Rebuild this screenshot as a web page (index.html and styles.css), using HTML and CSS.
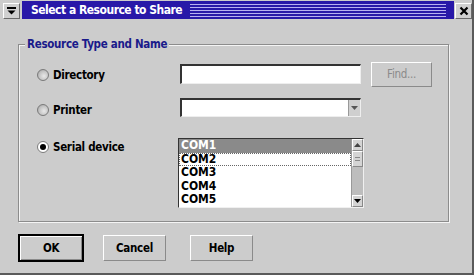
FILE: index.html
```html
<!DOCTYPE html>
<html>
<head>
<meta charset="utf-8">
<link rel="stylesheet" href="styles.css">
</head>
<body>
<div class="window">
  <div class="titlebar">
    <div class="tbtn sys">
      <svg width="11" height="10" viewBox="0 0 11 10"><rect x="1" y="1" width="9" height="2" fill="#000"/><path d="M1.5 4.5 H9.5 L5.5 8.5 Z" fill="#000"/></svg>
    </div>
    <div class="title">
      <span class="title-text">Select a Resource to Share</span>
      <span class="stripes"></span>
    </div>
    <div class="tbtn close">
      <svg width="10" height="10" viewBox="0 0 10 10"><path d="M1.5 1.5 L8.5 8.5 M8.5 1.5 L1.5 8.5" stroke="#000" stroke-width="2.2"/></svg>
    </div>
  </div>
  <div class="content">
    <div class="group">
      <span class="legend">Resource Type and Name</span>
      <div class="row r1">
        <label class="radio"><span class="dot"></span><span>Directory</span></label>
        <div class="field"></div>
        <div class="btn small disabled">Find...</div>
      </div>
      <div class="row r2">
        <label class="radio"><span class="dot"></span><span>Printer</span></label>
        <div class="field combo"><span class="combo-btn"><svg width="7" height="4" viewBox="0 0 7 4"><path d="M0 0 H7 L3.5 4 Z" fill="#555"/></svg></span></div>
      </div>
      <div class="row r3">
        <label class="radio"><span class="dot on"></span><span>Serial device</span></label>
        <div class="list">
          <div class="items">
            <div class="item sel">COM1</div>
            <div class="item focus">COM2</div>
            <div class="item">COM3</div>
            <div class="item">COM4</div>
            <div class="item">COM5</div>
          </div>
          <div class="vscroll">
            <span class="sbtn"><svg width="7" height="4" viewBox="0 0 7 4"><path d="M0 4 H7 L3.5 0 Z" fill="#444"/></svg></span>
            <span class="thumb"></span>
            <span class="track"></span>
            <span class="sbtn"><svg width="7" height="4" viewBox="0 0 7 4"><path d="M0 0 H7 L3.5 4 Z" fill="#000"/></svg></span>
          </div>
        </div>
      </div>
    </div>
    <div class="buttons">
      <div class="btn big default">OK</div>
      <div class="btn big cancel">Cancel</div>
      <div class="btn big help">Help</div>
    </div>
  </div>
</div>
</body>
</html>
```
FILE: styles.css
```css
html, body {
  margin: 0;
  padding: 0;
  background: #cccccc;
}
body {
  font-family: "DejaVu Sans Condensed", "DejaVu Sans", "Liberation Sans", sans-serif;
  font-stretch: condensed;
  font-weight: bold;
  font-size: 11.5px;
  letter-spacing: -0.3px;
  color: #000;
}
.window {
  width: 474px;
  height: 275px;
  box-sizing: border-box;
  background: #cccccc;
  border-right: 2px solid #5a5a5a;
  border-bottom: 2px solid #5a5a5a;
  display: flex;
  flex-direction: column;
}
.titlebar {
  height: 21px;
  display: flex;
  align-items: flex-start;
  padding: 1px 0 0 3px;
  box-sizing: border-box;
}
.tbtn {
  width: 17px;
  height: 16px;
  box-sizing: border-box;
  border: 1px solid;
  border-color: #ffffff #6a6a6a #6a6a6a #ffffff;
  background: #d0d0d0;
  display: flex;
  align-items: center;
  justify-content: center;
  margin-top: 2px;
}
.title {
  flex: 1;
  height: 18px;
  margin: 0 1px 0 2px;
  background: #2818a8;
  display: flex;
  align-items: center;
  padding-left: 9px;
  padding-right: 8px;
}
.title-text {
  color: #ffffff;
  font-size: 12px;
  letter-spacing: -0.5px;
  white-space: nowrap;
}
.stripes {
  flex: 1;
  height: 13px;
  margin-left: 8px;
  background: repeating-linear-gradient(to bottom, #b8b0f0 0, #b8b0f0 1px, #2818a8 1px, #2818a8 3px);
}
.content {
  flex: 1;
  display: flex;
  flex-direction: column;
  padding: 0 23px 0 18px;
}
.group {
  position: relative;
  margin-top: 23px;
  padding: 16px 0 0 18px;
  height: 178px;
  box-sizing: border-box;
  border: 1px solid #8c8c8c;
  box-shadow: inset 1px 1px 0 #f4f4f4, 1px 1px 0 #f4f4f4;
}
.legend {
  position: absolute;
  left: 6px;
  top: -8px;
  background: #cccccc;
  color: #1a1a8a;
  padding: 0 2px;
  line-height: 14px;
}
.row {
  display: flex;
  align-items: center;
}
.r1 { height: 26px; }
.r2 { margin-top: 11px; height: 19px; }
.r3 { margin-top: 21px; align-items: flex-start; }
.radio {
  width: 143px;
  display: flex;
  align-items: center;
  gap: 4px;
  position: relative;
  top: 1px;
}
.r2 .radio { top: 2px; }
.r3 .radio { margin-top: 1px; width: 141px; }
.dot {
  width: 12px;
  height: 12px;
  border-radius: 50%;
  box-sizing: border-box;
  border: 1px solid #7a7a7a;
  background: radial-gradient(circle at 60% 60%, #e8e8e8 0, #c4c4c4 55%, #9a9a9a 100%);
  position: relative;
}
.dot.on {
  background: #ffffff;
}
.dot.on::after {
  content: "";
  position: absolute;
  left: 2px;
  top: 2px;
  width: 6px;
  height: 6px;
  border-radius: 50%;
  background: #000;
}
.field {
  width: 181px;
  height: 20px;
  box-sizing: border-box;
  background: #ffffff;
  border: 1px solid;
  border-width: 2px 1px 1px 2px;
  border-color: #333 #eeeeee #eeeeee #333;
}
.combo {
  height: 19px;
  display: flex;
  justify-content: flex-end;
  align-items: stretch;
}
.combo-btn {
  width: 11px;
  background: #cfcfcf;
  border-left: 1px solid #999;
  display: flex;
  align-items: center;
  justify-content: center;
}
.btn {
  box-sizing: border-box;
  display: flex;
  align-items: center;
  justify-content: center;
  border: 1px solid;
  border-color: #ffffff #8a8a8a #8a8a8a #ffffff;
  background: #cccccc;
}
.small {
  width: 61px;
  height: 25px;
  margin-left: 10px;
}
.disabled {
  color: #8a8a8a;
  font-weight: normal;
}
.list {
  width: 186px;
  height: 70px;
  box-sizing: border-box;
  border: 1px solid;
  border-color: #333 #f0f0f0 #f0f0f0 #333;
  background: #fff;
  display: flex;
}
.items {
  flex: 1;
}
.item {
  height: 13.6px;
  line-height: 13px;
  padding-left: 2px;
  font-size: 12px;
  letter-spacing: 0;
  box-sizing: border-box;
}
.item.sel {
  background: #8a8a8a;
  color: #ffffff;
}
.item.focus {
  border: 1px dotted #666;
  line-height: 11px;
  padding-left: 1px;
}
.vscroll {
  width: 11px;
  display: flex;
  flex-direction: column;
  background: #bdbdbd;
  border-left: 1px solid #999;
}
.sbtn {
  height: 12px;
  display: flex;
  align-items: center;
  justify-content: center;
  background: #d4d4d4;
  border: 1px solid;
  border-color: #fff #888 #888 #fff;
  box-sizing: border-box;
}
.thumb {
  height: 16px;
  box-sizing: border-box;
  background: repeating-linear-gradient(to bottom, #d4d4d4 0, #d4d4d4 2px, #888 2px, #888 3px) content-box, #d4d4d4;
  padding: 3px 2px;
  border: 1px solid;
  border-color: #fff #888 #888 #fff;
}
.track { flex: 1; }
.buttons {
  display: flex;
  align-items: center;
  margin-top: 12px;
  height: 28px;
}
.big {
  height: 26px;
  width: 63px;
}
.default {
  width: 66px;
  height: 28px;
  border: 2px solid #000;
  box-shadow: inset 1px 1px 0 #fff, inset -1px -1px 0 #8a8a8a;
}
.cancel { margin-left: 19px; }
.help { margin-left: 24px; }
```
